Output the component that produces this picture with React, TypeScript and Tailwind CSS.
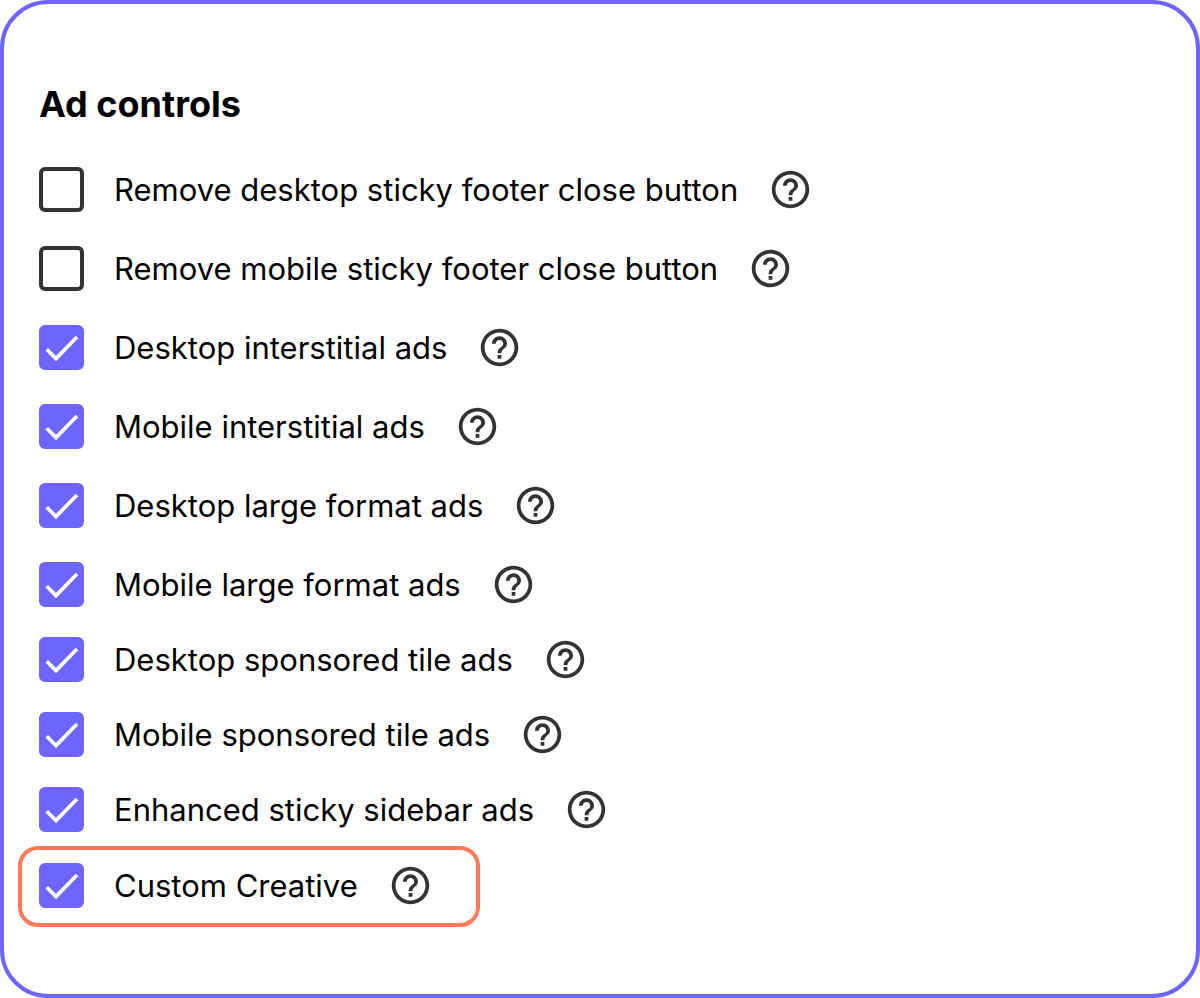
import { useState } from "react";

type Control = { id: string; label: string; checked: boolean };

const GENERAL: Control[] = [
  { id: "desktop-close", label: "Remove desktop sticky footer close button", checked: false },
  { id: "mobile-close", label: "Remove mobile sticky footer close button", checked: false },
  { id: "desktop-interstitial", label: "Desktop interstitial ads", checked: true },
  { id: "mobile-interstitial", label: "Mobile interstitial ads", checked: true },
  { id: "desktop-large", label: "Desktop large format ads", checked: true },
  { id: "mobile-large", label: "Mobile large format ads", checked: true },
];

const PLACEMENTS: Control[] = [
  { id: "desktop-tile", label: "Desktop sponsored tile ads", checked: true },
  { id: "mobile-tile", label: "Mobile sponsored tile ads", checked: true },
  { id: "sticky-sidebar", label: "Enhanced sticky sidebar ads", checked: true },
];

const CREATIVE: Control = { id: "custom-creative", label: "Custom Creative", checked: true };

function ControlRow({ control }: { control: Control }) {
  const [checked, setChecked] = useState(control.checked);
  return (
    <div className="flex items-center gap-[30px]">
      <span className="grid shrink-0">
        <input
          id={control.id}
          type="checkbox"
          checked={checked}
          onChange={(e) => setChecked(e.target.checked)}
          className="peer col-start-1 row-start-1 size-[45px] cursor-pointer appearance-none rounded-md border-4 border-[#333333] bg-white checked:border-[#6c66ff] checked:bg-[#6c66ff]"
        />
        <svg
          viewBox="0 0 45 45"
          aria-hidden="true"
          className="pointer-events-none invisible col-start-1 row-start-1 size-[45px] peer-checked:visible"
        >
          <path d="M7.7 24.2L17 33.5L38 12" fill="none" stroke="#fff" strokeWidth="3.7" />
        </svg>
      </span>
      <label htmlFor={control.id} className="cursor-pointer text-[31px] leading-[45px]">
        {control.label}
      </label>
      <button type="button" aria-label="Help" className="shrink-0 cursor-pointer">
        <svg viewBox="0 0 24 24" fill="#333333" aria-hidden="true" className="size-[45px]">
          <path d="M11 18h2v-2h-2v2zm1-16C6.48 2 2 6.48 2 12s4.48 10 10 10 10-4.48 10-10S17.52 2 12 2zm0 18c-4.41 0-8-3.59-8-8s3.59-8 8-8 8 3.59 8 8-3.59 8-8 8zm0-14c-2.21 0-4 1.79-4 4h2c0-1.1.9-2 2-2s2 .9 2 2c0 2-3 1.75-3 5h2c0-2.25 3-2.5 3-5 0-2.21-1.79-4-4-4z" />
        </svg>
      </button>
    </div>
  );
}

export default function App() {
  return (
    <main className="flex min-h-screen flex-col rounded-[48px] border-4 border-[#6c66ff] bg-white px-[35px] pt-[76px] pb-[65px] font-['Inter',sans-serif] text-black">
      <h1 className="text-[36px] leading-[48px] font-bold">Ad controls</h1>
      <div className="mt-[39px] flex flex-col gap-[34px]">
        {GENERAL.map((c) => (
          <ControlRow key={c.id} control={c} />
        ))}
      </div>
      <div className="mt-[30px] flex flex-col gap-[30px]">
        {PLACEMENTS.map((c) => (
          <ControlRow key={c.id} control={c} />
        ))}
      </div>
      <div className="mt-[14px] -ml-[21px] w-fit rounded-[20px] border-4 border-[#ff7a59] pt-[13px] pr-[43px] pb-[15px] pl-[17px]">
        <ControlRow control={CREATIVE} />
      </div>
    </main>
  );
}
